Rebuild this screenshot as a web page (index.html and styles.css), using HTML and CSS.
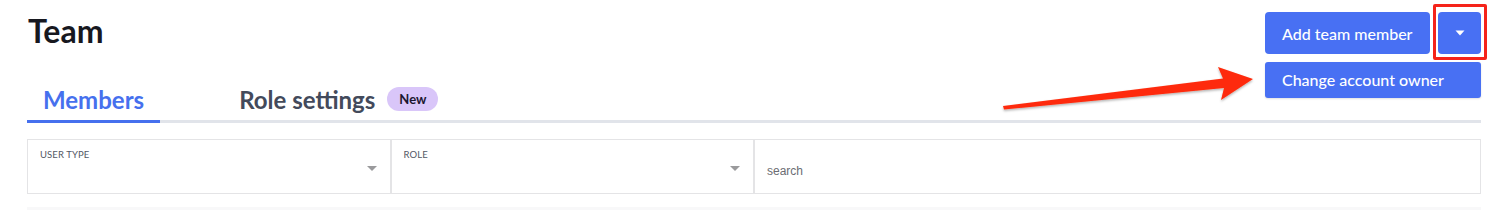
FILE: index.html
```html
<!DOCTYPE html>
<html lang="en">
<head>
<meta charset="utf-8">
<title>Team</title>
<link rel="stylesheet" href="styles.css">
</head>
<body>
<div class="page">
  <header class="header">
    <h1 class="title">Team</h1>
    <div class="actions">
      <button class="btn btn-primary">Add team member</button>
      <div class="toggle-wrap">
        <button class="btn btn-toggle" aria-label="More actions">
          <svg width="10" height="6" viewBox="0 0 10 6"><path d="M0.5 0.5 L9.5 0.5 L5 5.5 Z" fill="#fff"/></svg>
        </button>
        <span class="highlight"></span>
      </div>
      <div class="menu">
        <div class="menu-item">Change account owner</div>
      </div>
    </div>
  </header>

  <nav class="tabs">
    <div class="tab tab-active">Members</div>
    <div class="tab">Role settings <span class="badge">New</span></div>
  </nav>

  <div class="filters">
    <div class="filter filter-select">
      <span class="filter-label">USER TYPE</span>
      <span class="caret"></span>
    </div>
    <div class="filter filter-select">
      <span class="filter-label">ROLE</span>
      <span class="caret"></span>
    </div>
    <div class="filter filter-search">
      <span class="search-placeholder">search</span>
    </div>
  </div>

  <div class="table-top"></div>

  <svg class="callout" width="1500" height="210" viewBox="0 0 1500 210">
    <defs>
      <filter id="shadow" x="-5%" y="-50%" width="110%" height="200%">
        <feDropShadow dx="0" dy="1.5" stdDeviation="1.2" flood-color="#000" flood-opacity="0.3"/>
      </filter>
    </defs>
    <polygon points="1003,106 1223,78.5 1218,67 1253,79 1221,100 1224,88 1004,109.5" fill="#fe2a0a" filter="url(#shadow)"/>
  </svg>
</div>
</body>
</html>
```

FILE: styles.css
```css
* { box-sizing: border-box; }

html, body {
  margin: 0;
  padding: 0;
  background: #ffffff;
}

body {
  font-family: "Lato", "Liberation Sans", sans-serif;
  color: #1b1c24;
}

.page {
  position: relative;
  width: 1500px;
  height: 210px;
  padding: 12px 19px 0 27px;
  overflow: hidden;
}

.header {
  display: flex;
  justify-content: space-between;
  align-items: flex-start;
  height: 42px;
}

.title {
  margin: 0;
  padding-left: 1px;
  font-size: 32px;
  font-weight: 700;
  line-height: 38px;
  color: #17181f;
}

.actions {
  position: relative;
  display: flex;
  gap: 8px;
}

.btn {
  border: none;
  border-radius: 4px;
  background: #4870f3;
  color: #ffffff;
  font-family: "Lato", "Liberation Sans", sans-serif;
  font-size: 16px;
  font-weight: 500;
  height: 42px;
  white-space: nowrap;
  cursor: pointer;
}

.btn-primary {
  width: 165px;
  padding: 0 17px;
  text-align: left;
}

.toggle-wrap {
  position: relative;
}

.btn-toggle {
  width: 43px;
  display: flex;
  align-items: center;
  justify-content: center;
  padding: 0;
}

.highlight {
  position: absolute;
  top: -8px;
  left: -5px;
  right: -6px;
  bottom: -6px;
  border: 3px solid #f5231a;
  border-radius: 2px;
  pointer-events: none;
}

.menu {
  position: absolute;
  top: 50px;
  left: 0;
  right: 0;
  background: #4870f3;
  border-radius: 3px;
  box-shadow: 0 1px 2px rgba(0, 0, 0, 0.12);
}

.menu-item {
  height: 36px;
  padding: 0 17px 1px;
  display: flex;
  align-items: center;
  color: #ffffff;
  font-size: 16px;
  font-weight: 500;
  white-space: nowrap;
}

.tabs {
  display: flex;
  margin-top: 25px;
  border-bottom: 3px solid #e1e4ea;
}

.tab {
  display: flex;
  align-items: center;
  gap: 12px;
  height: 44px;
  margin-bottom: -3px;
  padding: 0 16px 1px;
  font-size: 24px;
  font-weight: 700;
  color: #434a5b;
  border-bottom: 3px solid transparent;
}

.tab + .tab {
  margin-left: 63px;
}

.tab-active {
  color: #4670ee;
  border-bottom-color: #4670ee;
}

.badge {
  display: inline-flex;
  align-items: center;
  height: 24px;
  padding: 0 12px;
  border-radius: 12px;
  background: #d9c6f9;
  color: #1c1630;
  font-size: 13px;
  font-weight: 700;
}

.filters {
  display: flex;
  margin-top: 16px;
  height: 55px;
}

.filter {
  border: 1px solid #e4e4e6;
  position: relative;
}

.filter-select {
  flex: 0 0 25%;
  padding: 9px 12px;
}

.filter-search {
  flex: 1 1 auto;
  display: flex;
  align-items: center;
  padding: 8px 12px 0;
}

.filter-label {
  display: block;
  font-size: 9.5px;
  color: #535865;
  letter-spacing: 0.1px;
}

.caret {
  position: absolute;
  right: 13px;
  top: 26px;
  width: 0;
  height: 0;
  border-left: 5px solid transparent;
  border-right: 5px solid transparent;
  border-top: 5px solid #9a9a9c;
}

.search-placeholder {
  font-family: "Liberation Sans", Arial, sans-serif;
  font-size: 12px;
  color: #6b6d72;
}

.table-top {
  margin-top: 13px;
  height: 10px;
  background: #f8f8f9;
}

.callout {
  position: absolute;
  top: 0;
  left: 0;
  pointer-events: none;
}
```
